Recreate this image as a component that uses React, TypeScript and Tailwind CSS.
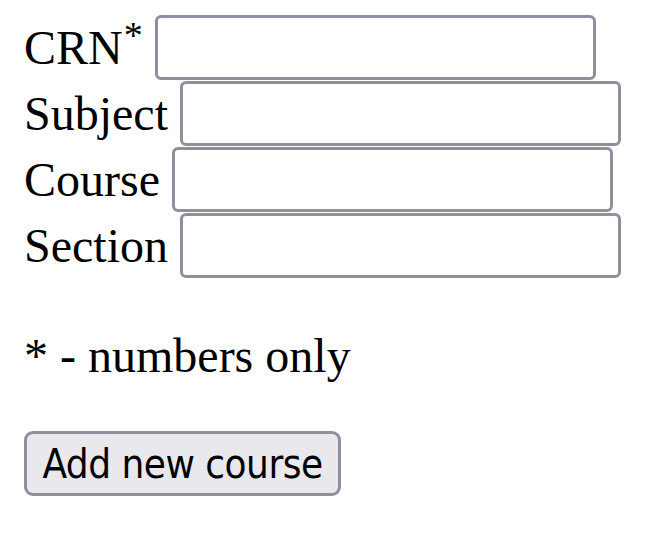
import React from "react";

const inputCls =
  "ml-[12px] h-[65px] w-[441px] shrink-0 rounded-[6px] border-[3px] border-[#8f8f9d] bg-white";

function Row({ label, sup }: { label: string; sup?: boolean }) {
  return (
    <div className="flex h-[65px] items-start">
      <span className="text-[48px] leading-[65px] whitespace-nowrap">
        {label}
        {sup && (
          <span className="relative top-[-16px] ml-[1px] text-[38px] leading-none">*</span>
        )}
      </span>
      <input type="text" className={inputCls} />
    </div>
  );
}

export default function App() {
  return (
    <div
      className="min-h-[545px] bg-white pl-[24px] pt-[15px] text-black"
      style={{ fontFamily: '"Liberation Serif", "Times New Roman", serif' }}
    >
      <div className="flex flex-col gap-[1px]">
        <Row label="CRN" sup />
        <Row label="Subject" />
        <Row label="Course" />
        <Row label="Section" />
      </div>
      <p className="mt-[50px] text-[48px] leading-[55px]">* - numbers only</p>
      <button
        className="mt-[48px] flex h-[65px] w-[317px] items-center justify-center rounded-[9px] border-[3px] border-[#8f8f9d] bg-[#e9e9ed] text-[40px] leading-none tracking-[-0.5px]"
        style={{ fontFamily: '"DejaVu Sans Condensed", "DejaVu Sans", Verdana, sans-serif' }}
      >
        Add new course
      </button>
    </div>
  );
}
